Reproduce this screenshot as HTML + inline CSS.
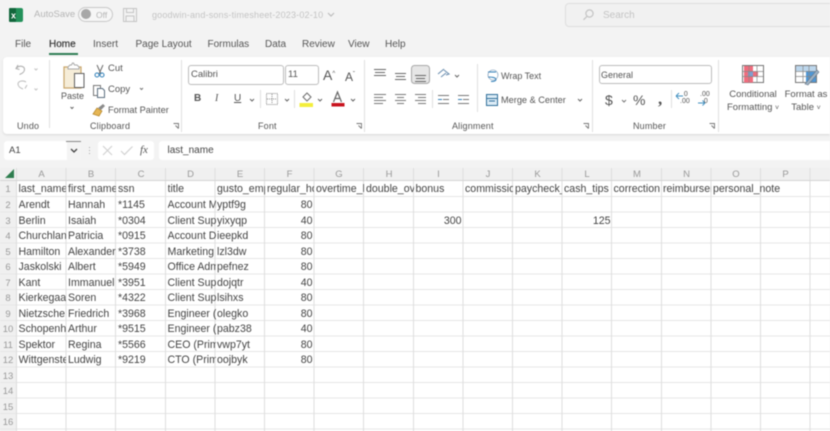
<!DOCTYPE html>
<html><head><meta charset="utf-8"><style>
html,body{margin:0;padding:0;width:830px;height:431px;overflow:hidden;background:#f3f3f3}
#w{position:absolute;left:0;top:0;width:830px;height:431px;overflow:hidden;background:#f3f3f3;filter:blur(.4px);font-family:"Liberation Sans",sans-serif;color:#444}
.t{position:absolute;white-space:nowrap;font-size:10px;line-height:12px}
.l{color:#555}
svg{position:absolute;overflow:visible}
#rib{position:absolute;left:3px;top:57px;width:827px;height:77px;background:#fff;border-radius:4px 0 0 4px;box-shadow:0 1px 2px #d8d8d8}
.box{position:absolute;background:#fff;border:1px solid #bdbdbd;border-radius:3px;box-sizing:border-box}
.sep{position:absolute;width:1px;background:#e0e0e0}
.r{position:absolute;left:0;width:830px;height:17px;font-size:10.6px;line-height:17px;color:#444}
.r b{position:absolute;top:0;font-weight:normal;overflow:hidden;white-space:nowrap;height:17px}
.n{left:0;width:16px;text-align:center;color:#999;font-size:9.5px}
.a{left:18.5px;width:47.5px}.bb{left:68px;width:48px}.c{left:118px;width:48px}.d{left:167.5px;width:48px}.e{left:217px;width:48px}
.f{left:267px;width:45.5px}.g1{left:316px;width:48px}.h{left:366px;width:48px}.i{left:415.5px;width:46px}.j{left:465px;width:48px}.k{left:515px;width:47px}.ll{left:564px;width:46.5px}.m{left:613.5px;width:48px}.nn{left:663px;width:48px}.o{left:713px;width:110px}
.rt{text-align:right}
.ch{position:absolute;top:168px;height:13px;font-size:9.5px;line-height:13px;color:#999;text-align:center}
</style></head><body><div id="w">

<!-- title bar -->
<svg style="left:0;top:0" width="30" height="30"><rect x="9" y="8" width="14" height="14" rx="2" fill="#23915a"/><rect x="9" y="8" width="7" height="14" rx="1" fill="#12663c"/><text x="11" y="18.500" font-size="9" font-weight="bold" fill="#fff" font-family="Liberation Sans">x</text></svg>
<div class="t" style="left:34px;top:9px;font-size:9.5px;color:#b5b5b5">AutoSave</div>
<div style="position:absolute;left:78px;top:7px;width:35px;height:15px;border:1px solid #c8c8c8;border-radius:8px;box-sizing:border-box;background:#f6f6f6"></div>
<div style="position:absolute;left:81px;top:9px;width:10px;height:10px;border-radius:5px;background:#a8a8a8"></div>
<div class="t" style="left:96px;top:9px;font-size:8.5px;color:#b5b5b5">Off</div>
<svg style="left:0;top:0" width="140" height="26"><path d="M123.500 8.500h13v13h-13zM126.500 8.500v4h7v-4M126 21v-5h8v5" fill="none" stroke="#c4c4c4"/></svg>
<div class="t" style="left:152px;top:9px;font-size:9px;color:#c4c4c4;letter-spacing:.02em">goodwin-and-sons-timesheet-2023-02-10</div>
<svg style="left:0;top:0" width="340" height="20"><path d="M328 13l3 3 3-3" fill="none" stroke="#bcbcbc" stroke-width="1.200"/></svg>
<div style="position:absolute;left:565px;top:3px;width:270px;height:24px;border:1px solid #dedede;border-radius:4px;box-sizing:border-box;background:#f1f1f1"></div>
<svg style="left:0;top:0" width="600" height="26"><circle cx="589.500" cy="13.500" r="3.600" fill="none" stroke="#c4c4c4" stroke-width="1.200"/><path d="M586.800 16.500l-3.300 3.300" stroke="#c4c4c4" stroke-width="1.200"/></svg>
<div class="t" style="left:603px;top:10px;color:#c4c4c4;font-size:10px">Search</div>

<!-- tabs -->
<div class="t l" style="left:15px;top:39px">File</div>
<div class="t" style="left:49px;top:39px;color:#333;-webkit-text-stroke:.2px #333">Home</div>
<div style="position:absolute;left:49px;top:52.500px;width:29px;height:2px;background:#2f7d55"></div>
<div class="t l" style="left:93px;top:39px">Insert</div>
<div class="t l" style="left:135.500px;top:39px">Page Layout</div>
<div class="t l" style="left:207.500px;top:39px">Formulas</div>
<div class="t l" style="left:265px;top:39px">Data</div>
<div class="t l" style="left:302px;top:39px">Review</div>
<div class="t l" style="left:348px;top:39px">View</div>
<div class="t l" style="left:385px;top:39px">Help</div>

<!-- ribbon -->
<div id="rib"></div>
<div class="sep" style="left:49px;top:60px;height:68px"></div>
<div class="sep" style="left:181px;top:60px;height:72px"></div>
<div class="sep" style="left:364px;top:60px;height:72px"></div>
<div class="sep" style="left:592px;top:60px;height:72px"></div>
<div class="sep" style="left:718px;top:60px;height:72px"></div>
<div class="sep" style="left:477px;top:64px;height:48px"></div>
<div class="sep" style="left:260px;top:90px;height:18px"></div>
<div class="sep" style="left:294px;top:90px;height:18px"></div>
<div class="sep" style="left:432px;top:90px;height:18px"></div>
<div class="sep" style="left:671px;top:90px;height:18px"></div>

<svg style="left:0;top:0" width="830" height="140" fill="none">
<!-- undo redo -->
<path d="M18 65l-2 3.500 3.500 1M16.500 68c3-3 8-2 8 1.500 0 2-2 4-5 5" stroke="#b0b0b0" stroke-width="1.100"/>
<path d="M27 85l-2 3.500M26 82c-3-2-8-1-8 2 0 2 2 4 5 5" stroke="#c0c0c0" stroke-width="1.100"/>
<path d="M34.500 68.500l1.500 1.500 1.500-1.500M34.500 88.500l1.500 1.500 1.500-1.500" stroke="#c4c4c4"/>
<!-- paste -->
<path d="M64 67h17v21H64z" fill="#f6edd8" stroke="#c9a66b" stroke-width="1.200"/>
<path d="M68 67l2-2h1.500l1-2h1l1 2H77l2 2v2H68z" fill="#fff" stroke="#a9a9a9"/>
<rect x="74.500" y="73.500" width="9.500" height="14" fill="#fff" stroke="#5f5f5f"/>
<path d="M70.500 107l1.500 1.500 1.500-1.500" stroke="#666"/>
<!-- cut -->
<path d="M97 65l4 9M103 65l-4 9" stroke="#6d6d6d"/><circle cx="97" cy="75" r="2" stroke="#2f7fb8"/><circle cx="102" cy="75" r="2" stroke="#2f7fb8"/>
<!-- copy -->
<path d="M93.500 85.500h7v10h-7z" fill="#fff" stroke="#777"/><path d="M97.500 88.500h5l2 2v7h-7z" fill="#fff" stroke="#5c6f80"/>
<path d="M140 88l1.500 1.500 1.500-1.500" stroke="#777"/>
<!-- painter -->
<path d="M93 114l4-6 5 3-3 5z" fill="#e6b655" stroke="#b98a2e" stroke-width=".8"/><path d="M98 108l5-4 2 2-4 4z" fill="#8b8b8b"/>
<!-- launchers -->
<path d="M173.500 123.500h5v5M175.500 125.500l3 3" stroke="#777" stroke-width=".9"/>
<path d="M356.500 123.500h5v5M358.500 125.500l3 3" stroke="#777" stroke-width=".9"/>
<path d="M583.500 123.500h5v5M585.500 125.500l3 3" stroke="#777" stroke-width=".9"/>
<path d="M709.500 123.500h5v5M711.500 125.500l3 3" stroke="#777" stroke-width=".9"/>
<!-- font dropdown chevrons -->
<path d="M277 75l2 2 2-2M313 75l2 2 2-2M705 75l2 2 2-2" stroke="#666"/>
<!-- U chevron, borders -->
<path d="M250 99l2 2 2-2M285 99l2 2 2-2M318 99l2 2 2-2M351 99l2 2 2-2" stroke="#666"/>
<rect x="266.500" y="93.500" width="11" height="11" stroke="#888" stroke-dasharray="1 1"/><path d="M272 94v10M267 99h10" stroke="#888" stroke-dasharray="1 1"/>
<!-- fill -->
<path d="M303 97l4-4 4 4-4 4z" stroke="#6d6d6d"/><rect x="299.500" y="103" width="13.500" height="4" fill="#f3ee3c"/>
<!-- font color -->
<path d="M333.500 102l4-10 4 10M335.500 98.500h4" stroke="#666" stroke-width="1.200"/><rect x="331.500" y="103" width="13" height="3.500" fill="#c8131e"/>
<!-- align top row -->
<path d="M374 69.500h12M375 72.500h10M374 75.500h12" stroke="#666"/>
<path d="M395 73.500h11M396 76.500h9M395 79.500h11" stroke="#666"/>
<rect x="411.500" y="65.500" width="18" height="18" rx="3" fill="#e6e6e6" stroke="#a8a8a8"/>
<path d="M415 75.500h11M416 78.500h9M415 81.500h11" stroke="#666"/>
<path d="M438 74l6-5M441 77l5-4M444 70l5 4-3 1" stroke="#6c8fb0" stroke-width="1.100"/><path d="M455 75l2 2 2-2" stroke="#666"/>
<!-- align bottom row -->
<path d="M374 94.500h12M374 97.500h9M374 100.500h12M374 103.500h9M395 94.500h11M397 97.500h7M395 100.500h11M397 103.500h7M415 94.500h11M418 97.500h8M415 100.500h11M418 103.500h8" stroke="#777"/>
<path d="M438 95.500h11M443 99.500h6M438 103.500h11M458 95.500h11M463 99.500h6M458 103.500h11" stroke="#777"/><path d="M438 99.500h4M458 99.500h4" stroke="#2f7fb8"/>
<!-- wrap -->
<path d="M488 72h8M488 77c5 0 8 1 8 2.500s-3 2-5 2" stroke="#2f7fb8"/><circle cx="493" cy="75" r="5" stroke="#6c8fb0" stroke-width=".6"/>
<!-- merge -->
<rect x="486.500" y="94.500" width="11" height="11" fill="#dcebf6" stroke="#2f6f9a"/><path d="M487 98.500h10M489 101h6" stroke="#2f6f9a"/>
<path d="M578 99l2 2 2-2" stroke="#666"/>
<!-- number -->
<path d="M622 100l2 2 2-2" stroke="#777"/>
<path d="M676 96l3-3M676 96l3 3M676 96h7" stroke="#3f8fc0" stroke-width=".9"/>
<path d="M698 103h7M705 103l-2.500-2.500M705 103l-2.500 2.500" stroke="#3f8fc0" stroke-width=".9"/>
<!-- conditional -->
<rect x="742.500" y="65.500" width="21" height="17" fill="#fff" stroke="#777"/>
<rect x="744" y="66" width="9" height="5.500" fill="#ef6d7e"/><rect x="744" y="71.500" width="4" height="5" fill="#ef6d7e"/><rect x="748" y="71.500" width="5" height="5" fill="#7f9fd0"/><rect x="753" y="71.500" width="5" height="5" fill="#ef6d7e"/><rect x="744" y="76.500" width="9" height="6" fill="#ef6d7e"/>
<path d="M749 66v16M757 66v16M743 71.500h20M743 76.500h20" stroke="#888" stroke-width=".7"/>
<!-- format as table -->
<rect x="795.500" y="65.500" width="21" height="17" fill="#fff" stroke="#777"/>
<rect x="796" y="66" width="20" height="5" fill="#bcd6ec"/><rect x="806" y="71" width="10" height="11" fill="#4e97d6"/>
<path d="M803 66v16M809 66v16M796 71.500h20M796 76.500h20" stroke="#888" stroke-width=".7"/>
<path d="M805 84l12-14 2 2-11 13z" fill="#9fb2c4" stroke="#6c7d8c" stroke-width=".6"/>
</svg>

<div class="t l" style="left:17px;top:120px;font-size:9px;letter-spacing:.02em">Undo</div>
<div class="t l" style="left:90px;top:120px;font-size:9px;letter-spacing:.02em">Clipboard</div>
<div class="t l" style="left:258px;top:120px;font-size:9px;letter-spacing:.02em">Font</div>
<div class="t l" style="left:452px;top:120px;font-size:9px;letter-spacing:.02em">Alignment</div>
<div class="t l" style="left:633px;top:120px;font-size:9px;letter-spacing:.02em">Number</div>

<div class="t l" style="left:61px;top:90px;font-size:9px">Paste</div>
<div class="t l" style="left:108px;top:63px;font-size:9.500px">Cut</div>
<div class="t l" style="left:108px;top:84px;font-size:9.500px">Copy</div>
<div class="t l" style="left:108px;top:104px;font-size:9.200px">Format Painter</div>

<div class="box" style="left:188px;top:65px;width:96px;height:20px"></div>
<div class="t l" style="left:191px;top:69px;font-size:9.500px">Calibri</div>
<div class="box" style="left:285px;top:65px;width:34px;height:20px"></div>
<div class="t l" style="left:288px;top:69px;font-size:9.500px">11</div>
<div class="t l" style="left:323px;top:67px;font-size:14px;line-height:14px">A<span style="font-size:6px;vertical-align:5px">^</span></div>
<div class="t l" style="left:345px;top:69px;font-size:12px;line-height:13px">A<span style="font-size:6px;vertical-align:5px">˘</span></div>
<div class="t l" style="left:194px;top:93px;font-weight:bold">B</div>
<div class="t l" style="left:215px;top:93px;font-style:italic;font-family:'Liberation Serif',serif">I</div>
<div class="t l" style="left:234px;top:93px;text-decoration:underline">U</div>

<div class="t l" style="left:501px;top:70px;font-size:9px">Wrap Text</div>
<div class="t l" style="left:501px;top:94px;font-size:9.200px">Merge &amp; Center</div>

<div class="box" style="left:599px;top:65px;width:113px;height:19px"></div>
<div class="t l" style="left:601px;top:69px;font-size:9px">General</div>
<div class="t l" style="left:605px;top:92px;font-size:14px;line-height:16px">$</div>
<div class="t l" style="left:633px;top:92px;font-size:14px;line-height:16px">%</div>
<div class="t l" style="left:658px;top:91px;font-size:17px;line-height:16px;font-weight:bold;font-family:'Liberation Serif',serif">,</div>
<div class="t" style="left:680px;top:91px;font-size:7px;line-height:7px;color:#555">&nbsp;&nbsp;0<br>.00</div>
<div class="t" style="left:700px;top:91px;font-size:7px;line-height:7px;color:#555">.00<br>&nbsp;&nbsp;0</div>

<div class="t l" style="left:727px;top:89px;width:52px;text-align:center;font-size:9.500px;line-height:12.500px">Conditional<br>Formatting <span style="font-size:7px">˅</span></div>
<div class="t l" style="left:784px;top:89px;width:44px;text-align:center;font-size:9.500px;line-height:12.500px">Format as<br>Table <span style="font-size:7px">˅</span></div>

<!-- formula bar -->
<div style="position:absolute;left:4px;top:141px;width:77px;height:19px;background:#fff;border-radius:3px"></div>
<div class="t" style="left:9px;top:145px;font-size:9.500px;color:#444">A1</div>
<div style="position:absolute;left:67px;top:141px;width:14px;height:19px;background:#f4f4f4"></div>
<div style="position:absolute;left:66px;top:140.500px;width:15px;height:1px;background:#888"></div>
<div style="position:absolute;left:98px;top:141px;width:56px;height:19px;background:#fff;border-radius:3px"></div>
<div style="position:absolute;left:159px;top:141px;width:671px;height:19px;background:#fff;border-radius:3px 0 0 3px"></div>
<div class="t" style="left:167.500px;top:145px;font-size:10px;color:#444">last_name</div>
<div class="t" style="left:140px;top:144px;font-size:11px;font-style:italic;font-family:'Liberation Serif',serif;color:#555">fx</div>
<svg style="left:0;top:0" width="140" height="165" fill="none"><path d="M71 149l3 3 3-3" stroke="#444" stroke-width="1.300"/><path d="M89.500 147v1M89.500 150v1M89.500 153v1" stroke="#aaa"/><path d="M103 146l9 9M112 146l-9 9" stroke="#d2d2d2" stroke-width="1.200"/><path d="M121 151l3.500 3.500 8-8" stroke="#d2d2d2" stroke-width="1.200"/></svg>

<!-- sheet -->
<div style="position:absolute;left:0;top:181px;width:830px;height:250px;background:#fff"></div>
<div style="position:absolute;left:0;top:168px;width:830px;height:13px;background:#f0f0f0"></div>
<div style="position:absolute;left:0;top:181px;width:17px;height:250px;background:#f0f0f0"></div>
<svg style="left:0;top:0" width="830" height="431" fill="none">
<path d="M14 169v9H5z" fill="#2e7d4f"/>
<path stroke="#e6e6e6" d="M0 196.500h830M0 212h830M0 227.500h830M0 243h830M0 258.500h830M0 274h830M0 289.500h830M0 305h830M0 320.500h830M0 336h830M0 351.500h830M0 367h830M0 382.500h830M0 398h830M0 413.500h830M0 429h830"/>
<path stroke="#dedede" d="M16.500 168v263M66 168v263M115.500 168v263M165.500 168v263M215 168v263M264.500 168v263M314 168v263M363.500 168v263M413.500 168v263M463 168v263M512.500 168v263M562 168v263M611.500 168v263M661.500 168v263M711 168v263M760.500 168v263M810 168v263"/>
<path stroke="#d4d4d4" d="M0 180.500h830"/>
</svg>
<div class="ch" style="left:17px;width:49px">A</div><div class="ch" style="left:66px;width:50px">B</div><div class="ch" style="left:116px;width:50px">C</div><div class="ch" style="left:166px;width:49px">D</div><div class="ch" style="left:215px;width:50px">E</div><div class="ch" style="left:265px;width:49px">F</div><div class="ch" style="left:314px;width:50px">G</div><div class="ch" style="left:364px;width:50px">H</div><div class="ch" style="left:414px;width:49px">I</div><div class="ch" style="left:463px;width:50px">J</div><div class="ch" style="left:513px;width:49px">K</div><div class="ch" style="left:562px;width:50px">L</div><div class="ch" style="left:612px;width:50px">M</div><div class="ch" style="left:662px;width:49px">N</div><div class="ch" style="left:711px;width:50px">O</div><div class="ch" style="left:761px;width:49px">P</div>

<div class="r" style="top:181px"><b class="n">1</b><b class="a">last_name</b><b class="bb">first_name</b><b class="c">ssn</b><b class="d">title</b><b class="e">gusto_employee</b><b class="f" style="width:47px">regular_hours</b><b class="g1">overtime_hours</b><b class="h">double_overtime</b><b class="i">bonus</b><b class="j">commission</b><b class="k">paycheck_tips</b><b class="ll">cash_tips</b><b class="m">correction</b><b class="nn">reimbursement</b><b class="o">personal_note</b></div>
<div class="r" style="top:197px"><b class="n">2</b><b class="a">Arendt</b><b class="bb">Hannah</b><b class="c">*1145</b><b class="d">Account Manager</b><b class="e">yptf9g</b><b class="f rt">80</b></div>
<div class="r" style="top:212.500px"><b class="n">3</b><b class="a">Berlin</b><b class="bb">Isaiah</b><b class="c">*0304</b><b class="d">Client Support</b><b class="e">yixyqp</b><b class="f rt">40</b><b class="i rt">300</b><b class="ll rt">125</b></div>
<div class="r" style="top:228px"><b class="n">4</b><b class="a">Churchland</b><b class="bb">Patricia</b><b class="c">*0915</b><b class="d">Account Director</b><b class="e">ieepkd</b><b class="f rt">80</b></div>
<div class="r" style="top:243.500px"><b class="n">5</b><b class="a">Hamilton</b><b class="bb">Alexander</b><b class="c">*3738</b><b class="d">Marketing Lead</b><b class="e">lzl3dw</b><b class="f rt">80</b></div>
<div class="r" style="top:259px"><b class="n">6</b><b class="a">Jaskolski</b><b class="bb">Albert</b><b class="c">*5949</b><b class="d">Office Admin</b><b class="e">pefnez</b><b class="f rt">80</b></div>
<div class="r" style="top:274.500px"><b class="n">7</b><b class="a">Kant</b><b class="bb">Immanuel</b><b class="c">*3951</b><b class="d">Client Support</b><b class="e">dojqtr</b><b class="f rt">40</b></div>
<div class="r" style="top:290px"><b class="n">8</b><b class="a">Kierkegaard</b><b class="bb">Soren</b><b class="c">*4322</b><b class="d">Client Support</b><b class="e">lsihxs</b><b class="f rt">80</b></div>
<div class="r" style="top:305.500px"><b class="n">9</b><b class="a">Nietzsche</b><b class="bb">Friedrich</b><b class="c">*3968</b><b class="d">Engineer (Primary)</b><b class="e">olegko</b><b class="f rt">80</b></div>
<div class="r" style="top:321px"><b class="n">10</b><b class="a">Schopenhauer</b><b class="bb">Arthur</b><b class="c">*9515</b><b class="d">Engineer (Primary)</b><b class="e">pabz38</b><b class="f rt">40</b></div>
<div class="r" style="top:336.500px"><b class="n">11</b><b class="a">Spektor</b><b class="bb">Regina</b><b class="c">*5566</b><b class="d">CEO (Primary)</b><b class="e">vwp7yt</b><b class="f rt">80</b></div>
<div class="r" style="top:352px"><b class="n">12</b><b class="a">Wittgenstein</b><b class="bb">Ludwig</b><b class="c">*9219</b><b class="d">CTO (Primary)</b><b class="e">oojbyk</b><b class="f rt">80</b></div>
<div class="r" style="top:367.500px"><b class="n">13</b></div>
<div class="r" style="top:383px"><b class="n">14</b></div>
<div class="r" style="top:398.500px"><b class="n">15</b></div>
<div class="r" style="top:414px"><b class="n">16</b></div>
</div></body></html>
